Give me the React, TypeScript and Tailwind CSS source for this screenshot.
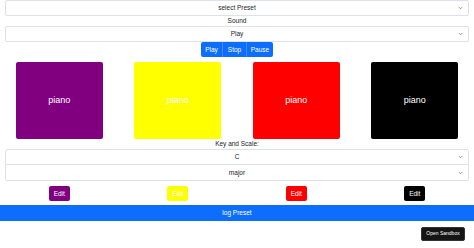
import React from "react";

const Chevron = () => (
  <svg
    className="absolute right-[5px] top-1/2 -translate-y-1/2"
    width="5"
    height="4"
    viewBox="0 0 16 16"
    fill="none"
    stroke="#343a40"
    strokeWidth="2"
    strokeLinecap="round"
    strokeLinejoin="round"
  >
    <path d="M2 5l6 6 6-6" />
  </svg>
);

const Select = ({ label, className = "" }: { label: string; className?: string }) => (
  <div
    className={`relative mx-[5px] h-[16px] flex items-center justify-center bg-white border border-[#dee2e6] rounded-[2px] text-[6.5px] text-[#212529] ${className}`}
  >
    {label}
    <Chevron />
  </div>
);

const pads = [
  { bg: "bg-[#800080]" },
  { bg: "bg-[#ffff00]" },
  { bg: "bg-[#ff0000]" },
  { bg: "bg-black" },
];

export default function App() {
  return (
    <div
      className="relative w-[474px] h-[248px] bg-white overflow-hidden text-[#212529]"
      style={{ fontFamily: '"Liberation Sans", Arial, sans-serif' }}
    >
      <Select label="select Preset" />
      <div className="h-[10px] flex items-center justify-center text-[6.5px]">Sound</div>
      <Select label="Play" />

      <div className="flex justify-center h-[15px] mt-0">
        <button className="w-[21px] bg-[#0d6efd] text-white text-[6.5px] rounded-l-[2px]">Play</button>
        <button className="w-[24px] bg-[#0d6efd] text-white text-[6.5px] border-l border-[#3d8bfd]">Stop</button>
        <button className="w-[27px] bg-[#0d6efd] text-white text-[6.5px] border-l border-[#3d8bfd] rounded-r-[2px]">Pause</button>
      </div>

      <div className="grid grid-cols-4 mt-[5px]">
        {pads.map((p, i) => (
          <div key={i} className="flex justify-center">
            <div
              className={`w-[87px] h-[77px] ${p.bg} rounded-[2px] flex items-center justify-center text-white text-[9px]`}
            >
              piano
            </div>
          </div>
        ))}
      </div>

      <div className="h-[10px] flex items-center justify-center text-[6.5px]">Key and Scale:</div>
      <Select label="C" className="rounded-b-none" />
      <Select label="major" className="rounded-t-none -mt-px h-[17px]" />

      <div className="grid grid-cols-4 mt-[5px]">
        {pads.map((p, i) => (
          <div key={i} className="flex justify-center">
            <button
              className={`w-[21px] h-[15px] ${p.bg} rounded-[2px] text-white text-[6.5px]`}
            >
              Edit
            </button>
          </div>
        ))}
      </div>

      <button className="mt-[4px] w-full h-[16px] bg-[#0d6efd] text-white text-[6.5px] flex items-center justify-center">
        log Preset
      </button>

      <button className="absolute right-[9px] bottom-[7px] w-[44px] h-[14px] bg-[#151515] text-white text-[5px] rounded-[2px] border border-[#333]">
        Open Sandbox
      </button>
    </div>
  );
}
